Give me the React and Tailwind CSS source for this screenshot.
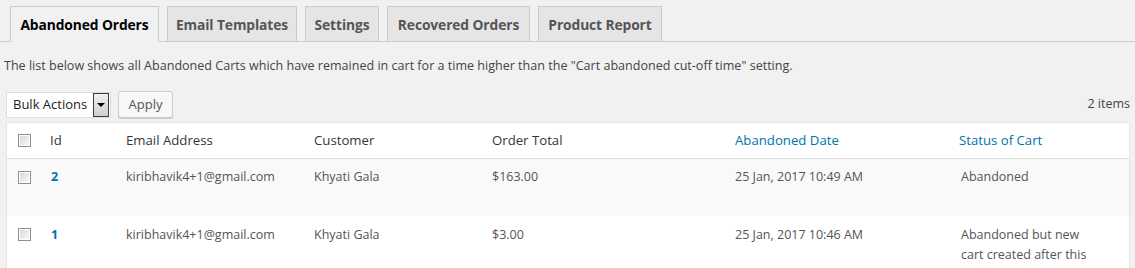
import React from "react";

const font = { fontFamily: '"Open Sans", "Noto Sans", Arial, sans-serif' };

function Checkbox() {
  return (
    <div className="w-[13px] h-[13px] border border-[#8e8f8f] bg-white p-px">
      <div className="w-full h-full bg-gradient-to-br from-[#d6d8e2] to-[#f9f9fb]" />
    </div>
  );
}

const tabs = [
  ["Abandoned Orders", "w-[149px]"],
  ["Email Templates", "w-[130px]"],
  ["Settings", "w-[74px]"],
  ["Recovered Orders", "w-[143px]"],
  ["Product Report", "w-[124px]"],
];

const cols = "grid grid-cols-[43px_76px_188px_178px_243px_224px_1fr]";

export default function App() {
  return (
    <div className="w-[1135px] h-[268px] overflow-hidden bg-[#f1f1f1] text-[#444]" style={font}>
      <div className="flex items-end gap-[8px] pl-[10px] pt-[6px] border-b border-[#ccc]">
        {tabs.map(([t, w], i) => (
          <div
            key={t}
            className={
              w +
              " h-[36px] -mb-px pt-[2px] flex items-center justify-center border border-[#ccc] text-[13.8px] font-bold tracking-[-0.1px] " +
              (i === 0 ? "bg-[#f1f1f1] border-b-[#f1f1f1] text-black" : "bg-[#e5e5e5] text-[#555]")
            }
          >
            {t}
          </div>
        ))}
      </div>
      <p className="pl-[4px] mt-[15px] text-[12.55px] leading-[18px] text-[#444]">
        The list below shows all Abandoned Carts which have remained in cart for a time higher than the "Cart abandoned cut-off time" setting.
      </p>
      <div className="flex items-center mt-[16px] px-[5px] h-[27px]">
        <div className="ml-px w-[105px] h-[26px] bg-white border border-[#ddd] flex items-center justify-between pl-[6px] pr-px">
          <span className="text-[13px] text-[#222]">Bulk Actions</span>
          <div className="w-[16px] h-[24px] border border-[#3c3c3c] bg-gradient-to-b from-[#f0f0f0] to-[#cfcfcf] flex items-center justify-center">
            <div className="w-0 h-0 border-l-[4px] border-r-[4px] border-t-[4px] border-l-transparent border-r-transparent border-t-black" />
          </div>
        </div>
        <div className="ml-[7px] w-[55px] h-[27px] border border-[#ccc] bg-[#f7f7f7] rounded-[3px] flex items-center justify-center text-[13px] text-[#555] shadow-[0_1px_0_#ccc]">
          Apply
        </div>
        <div className="ml-auto text-[12.5px] text-[#444]">2 items</div>
      </div>
      <div className="ml-[6px] mt-[4px] w-[1124px] bg-white border border-[#e5e5e5] text-[12.5px]">
        <div className={cols + " h-[36px] items-center border-b border-[#e1e1e1] text-[13.2px] text-[#32373c]"}>
          <div className="pl-[11px]"><Checkbox /></div>
          <div>Id</div>
          <div>Email Address</div>
          <div>Customer</div>
          <div>Order Total</div>
          <div className="text-[#0073aa]">Abandoned Date</div>
          <div className="text-[#0073aa]">Status of Cart</div>
        </div>
        <div className={cols + " h-[57px] bg-[#f9f9f9] pt-[9px] text-[#555]"}>
          <div className="pl-[11px] pt-[3px]"><Checkbox /></div>
          <div className="font-bold text-[#0073aa] pl-px">2</div>
          <div>kiribhavik4+1@gmail.com</div>
          <div>Khyati Gala</div>
          <div>$163.00</div>
          <div>25 Jan, 2017 10:49 AM</div>
          <div className="pl-[2px]">Abandoned</div>
        </div>
        <div className={cols + " h-[60px] pt-[9px] text-[#555] leading-[19.5px]"}>
          <div className="pl-[11px] pt-[3px]"><Checkbox /></div>
          <div className="font-bold text-[#0073aa] pl-px">1</div>
          <div>kiribhavik4+1@gmail.com</div>
          <div>Khyati Gala</div>
          <div>$3.00</div>
          <div>25 Jan, 2017 10:46 AM</div>
          <div className="pl-[2px] w-[135px]">Abandoned but new cart created after this</div>
        </div>
      </div>
    </div>
  );
}
